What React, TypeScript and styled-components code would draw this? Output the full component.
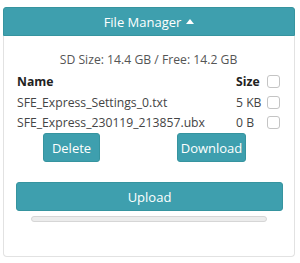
import styled, { createGlobalStyle } from 'styled-components';

const GlobalStyle = createGlobalStyle`
  html, body {
    margin: 0;
    padding: 0;
    background: #fff;
  }
  body {
    font-family: 'Open Sans', 'Noto Sans', Arial, sans-serif;
    color: #333;
  }
`;

const Page = styled.div`
  padding: 7px 5px 6px 3px;
`;

const Card = styled.div`
  width: 292px;
`;

const HeaderButton = styled.button`
  display: flex;
  align-items: center;
  justify-content: center;
  gap: 5px;
  width: 100%;
  height: 29px;
  border: 1px solid #36949f;
  border-radius: 3px 3px 0 0;
  background: #3e9fae;
  color: #fff;
  font-family: inherit;
  font-size: 13px;
  cursor: pointer;
`;

const Body = styled.div`
  border: 1px solid #e2e2e2;
  border-top: none;
  border-radius: 0 0 4px 4px;
  padding: 15px 14px 45px 13px;
  height: 221px;
  box-sizing: border-box;
`;

const Usage = styled.div`
  text-align: center;
  font-size: 12.2px;
  color: #555;
  margin-bottom: 3px;
`;

const Table = styled.div`
  display: flex;
  flex-direction: column;
`;

const Row = styled.div<{ $head?: boolean }>`
  display: grid;
  grid-template-columns: 1fr 31px 13px;
  align-items: center;
  height: ${p => (p.$head ? 21 : 20)}px;
  font-size: 12.2px;
  font-weight: ${p => (p.$head ? 700 : 400)};
  color: ${p => (p.$head ? '#222' : '#444')};
`;

const Check = styled.span`
  width: 11px;
  height: 11px;
  border: 1px solid #c4c4c4;
  border-radius: 3px;
  background: #fff;
`;

const Actions = styled.div`
  display: flex;
  gap: 77px;
  padding-left: 26px;
  margin-top: 1px;
`;

const ActionButton = styled.button<{ $w: number }>`
  width: ${p => p.$w}px;
  height: 29px;
  border: 1px solid #36949f;
  border-radius: 3px;
  background: #3e9fae;
  color: #fff;
  font-family: inherit;
  font-size: 13px;
  padding: 0;
  cursor: pointer;
`;

const UploadButton = styled(ActionButton)`
  margin: 20px 0 0 -1px;
`;

const Progress = styled.div`
  height: 4px;
  margin: 5px 13px 0 14px;
  border: 1px solid #d6d6d6;
  border-radius: 4px;
  background: #ececec;
`;

function Caret() {
  return (
    <svg width="8" height="5" viewBox="0 0 8 5">
      <path d="M0 5 L4 0 L8 5 Z" fill="#fff" />
    </svg>
  );
}

const files = [
  { name: 'SFE_Express_Settings_0.txt', size: '5 KB' },
  { name: 'SFE_Express_230119_213857.ubx', size: '0 B' },
];

export default function App() {
  return (
    <Page>
      <GlobalStyle />
      <Card>
        <HeaderButton>
          File Manager <Caret />
        </HeaderButton>
        <Body>
          <Usage>SD Size: 14.4 GB / Free: 14.2 GB</Usage>
          <Table>
            <Row $head>
              <span>Name</span>
              <span>Size</span>
              <Check />
            </Row>
            {files.map(f => (
              <Row key={f.name}>
                <span>{f.name}</span>
                <span>{f.size}</span>
                <Check />
              </Row>
            ))}
          </Table>
          <Actions>
            <ActionButton $w={57}>Delete</ActionButton>
            <ActionButton $w={69}>Download</ActionButton>
          </Actions>
          <UploadButton $w={267}>Upload</UploadButton>
          <Progress />
        </Body>
      </Card>
    </Page>
  );
}
